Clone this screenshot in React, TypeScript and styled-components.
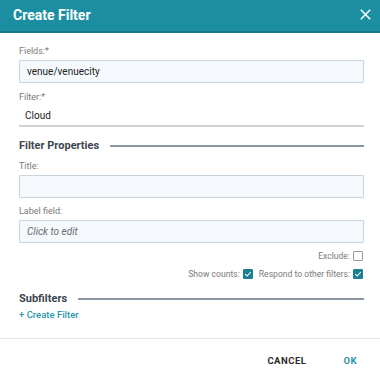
import React from "react";
import styled, { createGlobalStyle } from "styled-components";

const Colors = {
  teal: "#1b8fa1",
  tealDark: "#157887",
  check: "#1a7f93",
  link: "#2996a9",
  label: "#7a7a7a",
  text: "#333333",
  heading: "#3c4650",
  rule: "#8a96a1",
  inputBg: "#f5f9fd",
  inputBorder: "#c8d5df",
};

const GlobalStyle = createGlobalStyle`
  html, body {
    margin: 0;
    padding: 0;
    background: #ffffff;
    font-family: Roboto, "Liberation Sans", Arial, sans-serif;
  }
`;

const Dialog = styled.div`
  width: 380px;
  height: 375px;
  overflow: hidden;
  background: #ffffff;
  display: flex;
  flex-direction: column;
`;

const Header = styled.div`
  box-sizing: border-box;
  height: 33px;
  background: ${Colors.teal};
  border-bottom: 2px solid ${Colors.tealDark};
  display: flex;
  align-items: center;
  justify-content: space-between;
  padding: 0 9px 2px 13px;
  flex-shrink: 0;
`;

const Title = styled.div`
  color: #ffffff;
  font-size: 14px;
  font-weight: 700;
  line-height: 16px;
`;

const CloseButton = styled.button`
  border: none;
  background: none;
  padding: 0;
  width: 12px;
  height: 12px;
  display: flex;
  align-items: center;
  justify-content: center;
  cursor: pointer;
`;

const Body = styled.div`
  padding: 12px 16px 17px 19px;
  display: flex;
  flex-direction: column;
  border-bottom: 1px solid #e4e4e4;
`;

const Label = styled.div<{ gap?: number }>`
  color: ${Colors.label};
  font-size: 9px;
  line-height: 12px;
  margin-top: ${({ gap }) => gap ?? 0}px;
  margin-bottom: 3px;
`;

const Input = styled.div<{ placeholder?: boolean }>`
  box-sizing: border-box;
  height: 23px;
  background: ${Colors.inputBg};
  border: 1px solid ${Colors.inputBorder};
  border-radius: 1px;
  padding: 0 7px;
  display: flex;
  align-items: center;
  font-size: 10px;
  color: ${({ placeholder }) => (placeholder ? "#6a6a6a" : "#222222")};
  font-style: ${({ placeholder }) => (placeholder ? "italic" : "normal")};
`;

const Underlined = styled.div`
  height: 19px;
  line-height: 20px;
  padding: 0 6px;
  font-size: 10px;
  color: #222222;
  border-bottom: 2px solid #d3d3d3;
`;

const SectionHeading = styled.div<{ gap: number }>`
  display: flex;
  align-items: center;
  gap: 11px;
  margin-top: ${({ gap }) => gap}px;
  font-size: 11px;
  font-weight: 700;
  line-height: 14px;
  color: ${Colors.heading};

  &::after {
    content: "";
    flex: 1;
    height: 1.5px;
    background: ${Colors.rule};
  }
`;

const OptionRow = styled.div<{ gap: number }>`
  display: flex;
  justify-content: flex-end;
  align-items: center;
  gap: 6px;
  margin-top: ${({ gap }) => gap}px;
  margin-right: 1px;
  height: 14px;
`;

const Option = styled.label`
  display: flex;
  align-items: center;
  gap: 3px;
  font-size: 8.6px;
  color: ${Colors.label};
`;

const Box = styled.span<{ checked?: boolean }>`
  box-sizing: border-box;
  width: 10px;
  height: 10px;
  border-radius: 1px;
  display: inline-flex;
  align-items: center;
  justify-content: center;
  background: ${({ checked }) => (checked ? Colors.check : "#ffffff")};
  border: 1px solid ${({ checked }) => (checked ? Colors.check : "#9a9a9a")};
`;

const LinkButton = styled.div`
  margin-top: 3px;
  font-size: 9.5px;
  line-height: 12px;
  font-weight: 500;
  color: ${Colors.link};
`;

const Footer = styled.div`
  display: flex;
  justify-content: flex-end;
  gap: 13px;
  padding: 16px 11px 0 0;
`;

const FooterButton = styled.button<{ primary?: boolean }>`
  border: none;
  background: none;
  padding: 0 12px;
  font-family: inherit;
  font-size: 9.5px;
  line-height: 12px;
  font-weight: 700;
  letter-spacing: 0.5px;
  color: ${({ primary }) => (primary ? Colors.link : "#2b2b2b")};
`;

const Check = ({ checked }: { checked?: boolean }) => (
  <Box checked={checked}>
    {checked && (
      <svg width="8" height="8" viewBox="0 0 8 8">
        <path d="M1.3 4.2 L3.1 6 L6.8 2" fill="none" stroke="#ffffff" strokeWidth="1.1" />
      </svg>
    )}
  </Box>
);

export default function App() {
  return (
    <>
      <GlobalStyle />
      <Dialog>
        <Header>
          <Title>Create Filter</Title>
          <CloseButton aria-label="Close">
            <svg width="11" height="11" viewBox="0 0 11 11">
              <path d="M0.8 0.8 L10.2 10.2 M10.2 0.8 L0.8 10.2" stroke="#ffffff" strokeWidth="1.5" />
            </svg>
          </CloseButton>
        </Header>

        <Body>
          <Label>Fields:*</Label>
          <Input>venue/venuecity</Input>

          <Label gap={8}>Filter:*</Label>
          <Underlined>Cloud</Underlined>

          <SectionHeading gap={12}>Filter Properties</SectionHeading>

          <Label gap={7}>Title:</Label>
          <Input />

          <Label gap={7}>Label field:</Label>
          <Input placeholder>Click to edit</Input>

          <OptionRow gap={6}>
            <Option>
              Exclude: <Check />
            </Option>
          </OptionRow>
          <OptionRow gap={4}>
            <Option>
              Show counts: <Check checked />
            </Option>
            <Option>
              Respond to other filters: <Check checked />
            </Option>
          </OptionRow>

          <SectionHeading gap={11}>Subfilters</SectionHeading>
          <LinkButton>+ Create Filter</LinkButton>
        </Body>

        <Footer>
          <FooterButton>CANCEL</FooterButton>
          <FooterButton primary>OK</FooterButton>
        </Footer>
      </Dialog>
    </>
  );
}
